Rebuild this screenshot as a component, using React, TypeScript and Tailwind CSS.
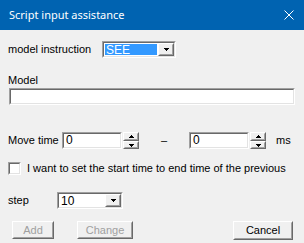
import React from "react";

const F = "font-['Liberation_Sans',Arial,sans-serif]";

function Sunken({ className = "", children }: { className?: string; children?: React.ReactNode }) {
  return (
    <div className={`box-border border border-t-[#a0a0a0] border-l-[#a0a0a0] border-b-white border-r-white ${className}`}>
      <div className="box-border h-full w-full border border-t-[#696969] border-l-[#696969] border-b-[#e3e3e3] border-r-[#e3e3e3] bg-white flex items-center">
        {children}
      </div>
    </div>
  );
}

function Raised({ className = "", children, inner = "" }: { className?: string; children?: React.ReactNode; inner?: string }) {
  return (
    <div className={`box-border border border-t-white border-l-white border-b-[#696969] border-r-[#696969] bg-[#f0f0f0] ${className}`}>
      <div className={`box-border h-full w-full border border-t-[#f0f0f0] border-l-[#f0f0f0] border-b-[#a0a0a0] border-r-[#a0a0a0] flex items-center justify-center ${inner}`}>
        {children}
      </div>
    </div>
  );
}

function Down() {
  return (
    <svg width="5" height="3" viewBox="0 0 5 3">
      <path d="M0 0h5L2.5 3z" fill="#000" shapeRendering="crispEdges" />
    </svg>
  );
}

function Up() {
  return (
    <svg width="5" height="3" viewBox="0 0 5 3">
      <path d="M0 3h5L2.5 0z" fill="#000" shapeRendering="crispEdges" />
    </svg>
  );
}

function Spin() {
  return (
    <div className="flex flex-col w-[16px] h-[17px] ml-[1px]">
      <Raised className="h-[9px] w-full"><Up /></Raised>
      <Raised className="h-[8px] w-full"><Down /></Raised>
    </div>
  );
}

function Combo({ w, text, selected }: { w: string; text: string; selected?: boolean }) {
  return (
    <Sunken className={`${w} h-[17px]`}>
      <div className="flex-1 h-full flex items-center pl-[1px] pr-[1px]">
        <div className={`h-[11px] flex-1 flex items-center pl-[1px] text-[12px] leading-none ${selected ? "bg-[#3399ff] text-white" : "text-black"}`}>{text}</div>
      </div>
      <Raised className="w-[16px] h-[13px]"><Down /></Raised>
    </Sunken>
  );
}

export default function App() {
  return (
    <div className={`w-[304px] h-[243px] bg-[#f0f0f0] text-black overflow-hidden whitespace-nowrap ${F}`}>
      <div className="h-[30px] bg-[#0063b1] flex items-center justify-between pl-[9px] pr-[10px]">
        <span className="text-white text-[11px] font-['Noto_Sans',sans-serif]">Script input assistance</span>
        <svg width="10" height="10" viewBox="0 0 10 10">
          <path d="M0.5 0.5L9.5 9.5M9.5 0.5L0.5 9.5" stroke="#fff" strokeWidth="1" />
        </svg>
      </div>
      <div className="flex flex-col pl-[8px] text-[11px] leading-[13px]">
        <div className="flex items-center mt-[11px] h-[17px]">
          <span className="w-[94px]">model instruction</span>
          <Combo w="w-[74px]" text="SEE" selected />
        </div>
        <div className="mt-[16px] h-[13px]">Model</div>
        <Sunken className="mt-[1px] ml-[1px] w-[286px] h-[17px]" />
        <div className="flex items-center mt-[27px] h-[17px]">
          <span className="w-[54px]">Move time</span>
          <Sunken className="w-[60px] h-[17px]"><span className="pl-[2px] text-[12px]">0</span></Sunken>
          <Spin />
          <span className="w-[50px] text-center">–</span>
          <Sunken className="w-[60px] h-[17px]"><span className="pl-[2px] text-[12px]">0</span></Sunken>
          <Spin />
          <span className="ml-[10px]">ms</span>
        </div>
        <div className="flex items-center mt-[13px] h-[13px]">
          <Sunken className="w-[13px] h-[13px]" />
          <span className="ml-[6px]">I want to set the start time to end time of the previous</span>
        </div>
        <div className="flex items-center mt-[17px] h-[17px]">
          <span className="w-[49px]">step</span>
          <Combo w="w-[66px]" text="10" />
        </div>
        <div className="flex items-center mt-[12px] h-[18px]">
          <Raised className="ml-[4px] w-[42px] h-[18px]"><span className="text-[#a0a0a0]">Add</span></Raised>
          <Raised className="ml-[23px] w-[56px] h-[18px]"><span className="text-[#a0a0a0]">Change</span></Raised>
          <Raised className="ml-[100px] w-[60px] h-[19px]"><span>Cancel</span></Raised>
        </div>
      </div>
    </div>
  );
}
